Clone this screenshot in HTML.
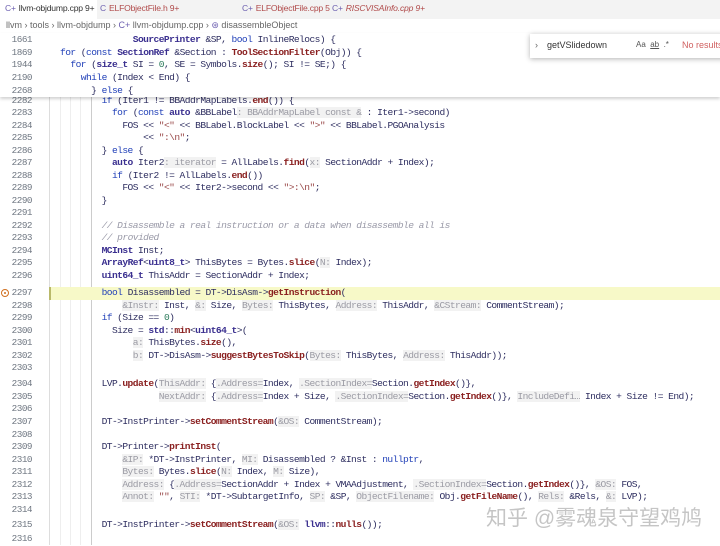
<!DOCTYPE html>
<html><head><meta charset="utf-8"><style>
*{margin:0;padding:0;box-sizing:border-box}
body{width:720px;height:545px;overflow:hidden;background:#fff;position:relative;font-family:"Liberation Sans",sans-serif}
.tabs{position:absolute;left:0;top:0;width:720px;height:19px;background:#f3f3f3;font-size:8.6px;letter-spacing:-0.2px;color:#555}
.tab{position:absolute;top:0;height:19px;line-height:17px;white-space:nowrap;overflow:hidden}
.tab i{font-style:normal;color:#6c5fb0;font-size:8.5px;margin-right:3px}
.crumb{position:absolute;left:6px;top:20px;font-size:9px;color:#666;white-space:nowrap}
.code{font-family:"Liberation Mono",monospace;font-size:9.6px;letter-spacing:-0.56px;white-space:pre;color:#2e2e60}
.row{position:absolute;left:0;width:720px;height:12.5px;line-height:12.5px}
.ln{position:absolute;left:0;width:32px;text-align:right;color:#6e7681;font-family:"Liberation Mono",monospace;font-size:9.3px;letter-spacing:-0.5px}
.tx{position:absolute;left:49.6px}
.k{color:#2241b8}.t{color:#3a2f8f;font-weight:bold}.f{color:#8a2020;font-weight:bold}.s{color:#9a4a4a}.c{color:#9a9aa8;font-style:italic}.n{color:#2a7a5a}
.h{color:#9b9ba4;background:#f2f2f2}
.sticky{position:absolute;left:0;top:33px;width:720px;height:64px;background:#fff;box-shadow:0 2px 3px rgba(0,0,0,.18);z-index:2}
.guide{position:absolute;top:97px;bottom:0;width:1px;background:#eee}
</style></head><body>
<div class="tabs">
 <div class="tab" style="left:0;width:97px;background:#fff;padding-left:5px;color:#333"><i>C+</i>llvm-objdump.cpp 9+ &nbsp;×</div>
 <div class="tab" style="left:97px;width:140px;padding-left:3px;color:#b04a4a"><i style="color:#6c5fb0">C</i>ELFObjectFile.h 9+</div>
 <div class="tab" style="left:242px;width:90px;color:#b04a4a"><i>C+</i>ELFObjectFile.cpp 5</div>
 <div class="tab" style="left:332px;width:120px;color:#b04a4a;font-style:italic"><i>C+</i>RISCVISAInfo.cpp 9+</div>
</div>
<div class="crumb">llvm › tools › llvm-objdump › <span style="color:#6c5fb0">C+</span> llvm-objdump.cpp › <span style="color:#6c5fb0">⊛</span> disassembleObject</div>

<div class="sticky code">
<div class="row" style="top:1px"><span class="ln">1661</span><span class="tx">                <span class="t">SourcePrinter</span> &amp;SP, <span class="k">bool</span> InlineRelocs) {</span></div>
<div class="row" style="top:13.7px"><span class="ln">1869</span><span class="tx">  <span class="k">for</span> (<span class="k">const</span> <span class="t">SectionRef</span> &amp;Section : <span class="f">ToolSectionFilter</span>(Obj)) {</span></div>
<div class="row" style="top:26.4px"><span class="ln">1944</span><span class="tx">    <span class="k">for</span> (<span class="t">size_t</span> SI = <span class="n">0</span>, SE = Symbols.<span class="f">size</span>(); SI != SE;) {</span></div>
<div class="row" style="top:39.1px"><span class="ln">2190</span><span class="tx">      <span class="k">while</span> (Index &lt; End) {</span></div>
<div class="row" style="top:51.8px"><span class="ln">2268</span><span class="tx">        } <span class="k">else</span> {</span></div>
</div>

<div style="position:absolute;left:49px;top:97px;bottom:0;width:1px;background:#ddd"></div>
<div class="guide" style="left:60px"></div><div class="guide" style="left:70px"></div><div class="guide" style="left:80px"></div><div class="guide" style="left:91px;background:#ccc"></div>
<div style="position:absolute;left:49px;top:287px;width:671px;height:12.5px;background:#f7f9c8"></div>
<div style="position:absolute;left:49px;top:287px;width:2px;height:12.5px;background:#b9b96a"></div>
<div style="position:absolute;left:1px;top:289px;width:8px;height:8px;border:1.5px solid #d07020;border-radius:50%"><div style="position:absolute;left:1.5px;top:1.5px;width:2px;height:2px;background:#d07020;border-radius:50%"></div></div>

<div class="code" id="main">
<div class="row" style="top:94.5px"><span class="ln">2282</span><span class="tx">          <span class="k">if</span> (Iter1 != BBAddrMapLabels.<span class="f">end</span>()) {</span></div>
<div class="row" style="top:107px"><span class="ln">2283</span><span class="tx">            <span class="k">for</span> (<span class="k">const</span> <span class="t">auto</span> &amp;BBLabel<span class="h">: BBAddrMapLabel const &amp;</span> : Iter1-&gt;second)</span></div>
<div class="row" style="top:119.5px"><span class="ln">2284</span><span class="tx">              FOS &lt;&lt; <span class="s">"&lt;"</span> &lt;&lt; BBLabel.BlockLabel &lt;&lt; <span class="s">"&gt;"</span> &lt;&lt; BBLabel.PGOAnalysis</span></div>
<div class="row" style="top:132px"><span class="ln">2285</span><span class="tx">                  &lt;&lt; <span class="s">":\n"</span>;</span></div>
<div class="row" style="top:144.5px"><span class="ln">2286</span><span class="tx">          } <span class="k">else</span> {</span></div>
<div class="row" style="top:157px"><span class="ln">2287</span><span class="tx">            <span class="t">auto</span> Iter2<span class="h">: iterator</span> = AllLabels.<span class="f">find</span>(<span class="h">x:</span> SectionAddr + Index);</span></div>
<div class="row" style="top:169.5px"><span class="ln">2288</span><span class="tx">            <span class="k">if</span> (Iter2 != AllLabels.<span class="f">end</span>())</span></div>
<div class="row" style="top:182px"><span class="ln">2289</span><span class="tx">              FOS &lt;&lt; <span class="s">"&lt;"</span> &lt;&lt; Iter2-&gt;second &lt;&lt; <span class="s">"&gt;:\n"</span>;</span></div>
<div class="row" style="top:194.5px"><span class="ln">2290</span><span class="tx">          }</span></div>
<div class="row" style="top:207px"><span class="ln">2291</span></div>
<div class="row" style="top:219.5px"><span class="ln">2292</span><span class="tx">          <span class="c">// Disassemble a real instruction or a data when disassemble all is</span></span></div>
<div class="row" style="top:232px"><span class="ln">2293</span><span class="tx">          <span class="c">// provided</span></span></div>
<div class="row" style="top:244.5px"><span class="ln">2294</span><span class="tx">          <span class="t">MCInst</span> Inst;</span></div>
<div class="row" style="top:257px"><span class="ln">2295</span><span class="tx">          <span class="t">ArrayRef</span>&lt;<span class="t">uint8_t</span>&gt; ThisBytes = Bytes.<span class="f">slice</span>(<span class="h">N:</span> Index);</span></div>
<div class="row" style="top:269.5px"><span class="ln">2296</span><span class="tx">          <span class="t">uint64_t</span> ThisAddr = SectionAddr + Index;</span></div>
<div class="row" style="top:287px"><span class="ln">2297</span><span class="tx">          <span class="k">bool</span> Disassembled = DT-&gt;DisAsm-&gt;<span class="f">getInstruction</span>(</span></div>
<div class="row" style="top:299.5px"><span class="ln">2298</span><span class="tx">              <span class="h">&amp;Instr:</span> Inst, <span class="h">&amp;:</span> Size, <span class="h">Bytes:</span> ThisBytes, <span class="h">Address:</span> ThisAddr, <span class="h">&amp;CStream:</span> CommentStream);</span></div>
<div class="row" style="top:312px"><span class="ln">2299</span><span class="tx">          <span class="k">if</span> (Size == <span class="n">0</span>)</span></div>
<div class="row" style="top:324.5px"><span class="ln">2300</span><span class="tx">            Size = <span class="t">std</span>::<span class="f">min</span>&lt;<span class="t">uint64_t</span>&gt;(</span></div>
<div class="row" style="top:337px"><span class="ln">2301</span><span class="tx">                <span class="h">a:</span> ThisBytes.<span class="f">size</span>(),</span></div>
<div class="row" style="top:349.5px"><span class="ln">2302</span><span class="tx">                <span class="h">b:</span> DT-&gt;DisAsm-&gt;<span class="f">suggestBytesToSkip</span>(<span class="h">Bytes:</span> ThisBytes, <span class="h">Address:</span> ThisAddr));</span></div>
<div class="row" style="top:362px"><span class="ln">2303</span></div>
<div class="row" style="top:378px"><span class="ln">2304</span><span class="tx">          LVP.<span class="f">update</span>(<span class="h">ThisAddr:</span> {<span class="h">.Address=</span>Index, <span class="h">.SectionIndex=</span>Section.<span class="f">getIndex</span>()},</span></div>
<div class="row" style="top:390.5px"><span class="ln">2305</span><span class="tx">                     <span class="h">NextAddr:</span> {<span class="h">.Address=</span>Index + Size, <span class="h">.SectionIndex=</span>Section.<span class="f">getIndex</span>()}, <span class="h">IncludeDefi…</span> Index + Size != End);</span></div>
<div class="row" style="top:403px"><span class="ln">2306</span></div>
<div class="row" style="top:416px"><span class="ln">2307</span><span class="tx">          DT-&gt;InstPrinter-&gt;<span class="f">setCommentStream</span>(<span class="h">&amp;OS:</span> CommentStream);</span></div>
<div class="row" style="top:428.5px"><span class="ln">2308</span></div>
<div class="row" style="top:441px"><span class="ln">2309</span><span class="tx">          DT-&gt;Printer-&gt;<span class="f">printInst</span>(</span></div>
<div class="row" style="top:453.5px"><span class="ln">2310</span><span class="tx">              <span class="h">&amp;IP:</span> *DT-&gt;InstPrinter, <span class="h">MI:</span> Disassembled ? &amp;Inst : <span class="k">nullptr</span>,</span></div>
<div class="row" style="top:466px"><span class="ln">2311</span><span class="tx">              <span class="h">Bytes:</span> Bytes.<span class="f">slice</span>(<span class="h">N:</span> Index, <span class="h">M:</span> Size),</span></div>
<div class="row" style="top:478.5px"><span class="ln">2312</span><span class="tx">              <span class="h">Address:</span> {<span class="h">.Address=</span>SectionAddr + Index + VMAAdjustment, <span class="h">.SectionIndex=</span>Section.<span class="f">getIndex</span>()}, <span class="h">&amp;OS:</span> FOS,</span></div>
<div class="row" style="top:491px"><span class="ln">2313</span><span class="tx">              <span class="h">Annot:</span> <span class="s">""</span>, <span class="h">STI:</span> *DT-&gt;SubtargetInfo, <span class="h">SP:</span> &amp;SP, <span class="h">ObjectFilename:</span> Obj.<span class="f">getFileName</span>(), <span class="h">Rels:</span> &amp;Rels, <span class="h">&amp;:</span> LVP);</span></div>
<div class="row" style="top:503.5px"><span class="ln">2314</span></div>
<div class="row" style="top:519px"><span class="ln">2315</span><span class="tx">          DT-&gt;InstPrinter-&gt;<span class="f">setCommentStream</span>(<span class="h">&amp;OS:</span> <span class="t">llvm</span>::<span class="f">nulls</span>());</span></div>
<div class="row" style="top:533px"><span class="ln">2316</span></div>
</div>

<div style="position:absolute;left:530px;top:34px;width:195px;height:24px;background:#fff;box-shadow:0 1px 5px rgba(0,0,0,.3);z-index:3;font-size:9px;white-space:nowrap">
 <span style="position:absolute;left:5px;top:6px;color:#666">›</span>
 <span style="position:absolute;left:17px;top:6px;color:#333">getVSlidedown</span>
 <span style="position:absolute;left:106px;top:6px;color:#555;font-size:8px">Aa &nbsp;<u>ab</u> &nbsp;.*</span>
 <span style="position:absolute;left:152px;top:6px;color:#d06060">No results</span>
</div>
<div style="position:absolute;left:486px;top:502px;font-family:'Liberation Sans','Noto Sans CJK SC',sans-serif;font-size:21px;color:rgba(150,150,150,.55);white-space:nowrap;z-index:4">知乎 @雾魂泉守望鸡鸠</div>
</body></html>
